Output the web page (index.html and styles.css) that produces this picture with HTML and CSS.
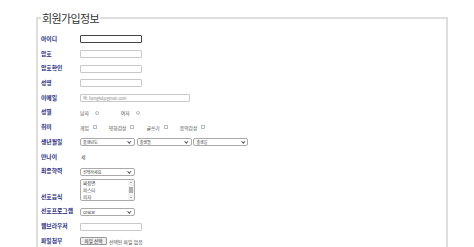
FILE: index.html
```html
<!DOCTYPE html>
<html lang="ko">

<head>
    <meta charset="UTF-8">
    <meta name="viewport" content="width=device-width, initial-scale=1.0">
    <title>회원가입</title>
    <link rel="stylesheet" href="styles.css">
</head>

<body>
    <form class="join-form">
        <fieldset class="join">
            <legend>회원가입정보</legend>

            <div class="row">
                <label class="label" for="userid">아이디</label>
                <div class="field"><input type="text" id="userid" class="text focus" autofocus></div>
            </div>
            <div class="row">
                <label class="label" for="pw">암호</label>
                <div class="field"><input type="password" id="pw" class="text"></div>
            </div>
            <div class="row">
                <label class="label" for="pw2">암호확인</label>
                <div class="field"><input type="password" id="pw2" class="text"></div>
            </div>
            <div class="row">
                <label class="label" for="name">성명</label>
                <div class="field"><input type="text" id="name" class="text"></div>
            </div>
            <div class="row">
                <label class="label" for="email">이메일</label>
                <div class="field"><input type="email" id="email" class="text wide" placeholder="예: hongkd@gmail.com"></div>
            </div>
            <div class="row">
                <span class="label">성별</span>
                <div class="field gender">
                    <label>남자<input type="radio" name="gender" value="m"></label>
                    <label>여자<input type="radio" name="gender" value="f"></label>
                </div>
            </div>
            <div class="row">
                <span class="label">취미</span>
                <div class="field hobby">
                    <label>게임<input type="checkbox" name="hobby"></label>
                    <label>영화감상<input type="checkbox" name="hobby"></label>
                    <label>글쓰기<input type="checkbox" name="hobby"></label>
                    <label>음악감상<input type="checkbox" name="hobby"></label>
                </div>
            </div>
            <div class="row">
                <span class="label">생년월일</span>
                <div class="field birth">
                    <span class="select-box">
                        <select class="sel">
                            <option>출생년도</option>
                        </select>
                    </span>
                    <span class="select-box">
                        <select class="sel">
                            <option>출생월</option>
                        </select>
                    </span>
                    <span class="select-box">
                        <select class="sel">
                            <option>출생일</option>
                        </select>
                    </span>
                </div>
            </div>
            <div class="row">
                <span class="label">만나이</span>
                <div class="field age">세</div>
            </div>
            <div class="row">
                <label class="label" for="school">최종학력</label>
                <div class="field">
                    <span class="select-box">
                        <select id="school" class="sel">
                            <option>선택하세요</option>
                            <option>고등학교</option>
                            <option>대학교</option>
                            <option>대학원</option>
                        </select>
                    </span>
                </div>
            </div>
            <div class="row tall">
                <span class="label">선호음식</span>
                <div class="field">
                    <!-- listbox: the browser hides real scrollbars, so it is drawn by hand -->
                    <div class="listbox" role="listbox" aria-multiselectable="true">
                        <ul class="options">
                            <li role="option">짜장면</li>
                            <li role="option">파스타</li>
                            <li role="option">피자</li>
                        </ul>
                        <div class="scroll">
                            <span class="arrow up"></span>
                            <span class="track"><span class="thumb"></span></span>
                            <span class="arrow down"></span>
                        </div>
                    </div>
                </div>
            </div>
            <div class="row">
                <label class="label" for="program">선호프로그램</label>
                <div class="field">
                    <span class="select-box">
                        <select id="program" class="sel">
                            <option>Oracle</option>
                            <option>Java</option>
                            <option>Python</option>
                        </select>
                    </span>
                </div>
            </div>
            <div class="row">
                <label class="label" for="browser">웹브라우저</label>
                <div class="field"><input type="text" id="browser" class="text"></div>
            </div>
            <div class="row">
                <span class="label">파일첨부</span>
                <div class="field">
                    <label class="file-btn">파일 선택<input type="file" hidden></label>
                    <span class="file-name">선택된 파일 없음</span>
                </div>
            </div>
        </fieldset>
    </form>
</body>

</html>
```

FILE: styles.css
```css
* {
    margin: 0;
    padding: 0;
    box-sizing: border-box;
}

body {
    background-color: #fff;
    font-family: "Noto Sans CJK KR", "Noto Sans", sans-serif;
}

.join {
    margin: 10px 26px 0 36px;
    padding: 6px 3px 30px;
    border: 2px solid #dedede;
}

.join legend {
    padding: 0 1px;
    font-size: 11px;
    line-height: 16px;
    letter-spacing: -0.6px;
    color: #333;
}

.row {
    display: grid;
    grid-template-columns: 39px 1fr;
    align-items: center;
    height: 14.7px;
}

.row.tall {
    height: 25.6px;
    align-items: end;
}

.row.tall .field {
    padding-bottom: 3.6px;
}

.label {
    font-size: 5.8px;
    font-weight: bold;
    line-height: 14.7px;
    color: #262a7c;
    white-space: nowrap;
}

.field {
    display: flex;
    align-items: center;
    font-size: 4.8px;
    color: #444;
}

.text {
    width: 62px;
    height: 8px;
    padding: 0 2px;
    border: 1px solid #c8c8c8;
    border-radius: 1px;
    font-size: 4px;
    font-family: inherit;
    outline: none;
}

.text.wide {
    width: 110px;
}

.text::placeholder {
    color: #888;
}

.text.focus {
    border-color: #444;
}

.gender {
    gap: 22px;
}

.hobby {
    gap: 12px;
}

.gender label,
.hobby label {
    display: flex;
    align-items: center;
}

.gender input,
.hobby input {
    appearance: none;
    width: 4px;
    height: 4px;
    margin-left: 4px;
    border: 1px solid #bbb;
    background-color: #fff;
}

.gender input {
    margin-left: 6px;
    border-radius: 50%;
}

.hobby input {
    border-radius: 0.5px;
}

.birth {
    gap: 1.7px;
}

.select-box {
    position: relative;
    display: block;
}

/* small chevron drawn over the select's right edge */
.select-box::after {
    content: "";
    position: absolute;
    top: 2.3px;
    right: 4px;
    width: 1.6px;
    height: 1.6px;
    border-right: 0.6px solid #555;
    border-bottom: 0.6px solid #555;
    transform: rotate(45deg);
    pointer-events: none;
}

.sel {
    appearance: none;
    display: block;
    width: 55px;
    height: 8px;
    padding: 0 2px;
    border: 1px solid #aaa;
    border-radius: 2px;
    background-color: #fff;
    font-size: 4px;
    font-family: inherit;
    color: #333;
    outline: none;
}

.listbox {
    display: flex;
    width: 55px;
    height: 22px;
    border: 1px solid #aaa;
    border-radius: 2px;
    background-color: #fff;
    overflow: hidden;
}

.options {
    flex: 1;
    list-style: none;
    padding: 0.5px 2px;
    font-size: 4.5px;
    line-height: 6.6px;
    color: #444;
}

.scroll {
    display: flex;
    flex-direction: column;
    width: 6px;
    background-color: #f1f1f1;
}

.arrow {
    display: flex;
    justify-content: center;
    align-items: center;
    height: 5px;
}

.arrow::before {
    content: "";
    border-left: 1.3px solid transparent;
    border-right: 1.3px solid transparent;
}

.arrow.up::before {
    border-bottom: 1.5px solid #666;
}

.arrow.down::before {
    border-top: 1.5px solid #666;
}

.track {
    flex: 1;
    display: flex;
    align-items: center;
    padding: 0 0.8px;
}

.thumb {
    flex: 1;
    height: 6px;
    background-color: #b0b0b0;
}

.age {
    padding-left: 1px;
}

.file-btn {
    display: flex;
    align-items: center;
    justify-content: center;
    width: 27px;
    height: 8px;
    border: 1px solid #999;
    border-radius: 1px;
    background-color: #efefef;
    font-size: 4.5px;
    color: #222;
}

.file-name {
    margin-left: 2px;
}
```
